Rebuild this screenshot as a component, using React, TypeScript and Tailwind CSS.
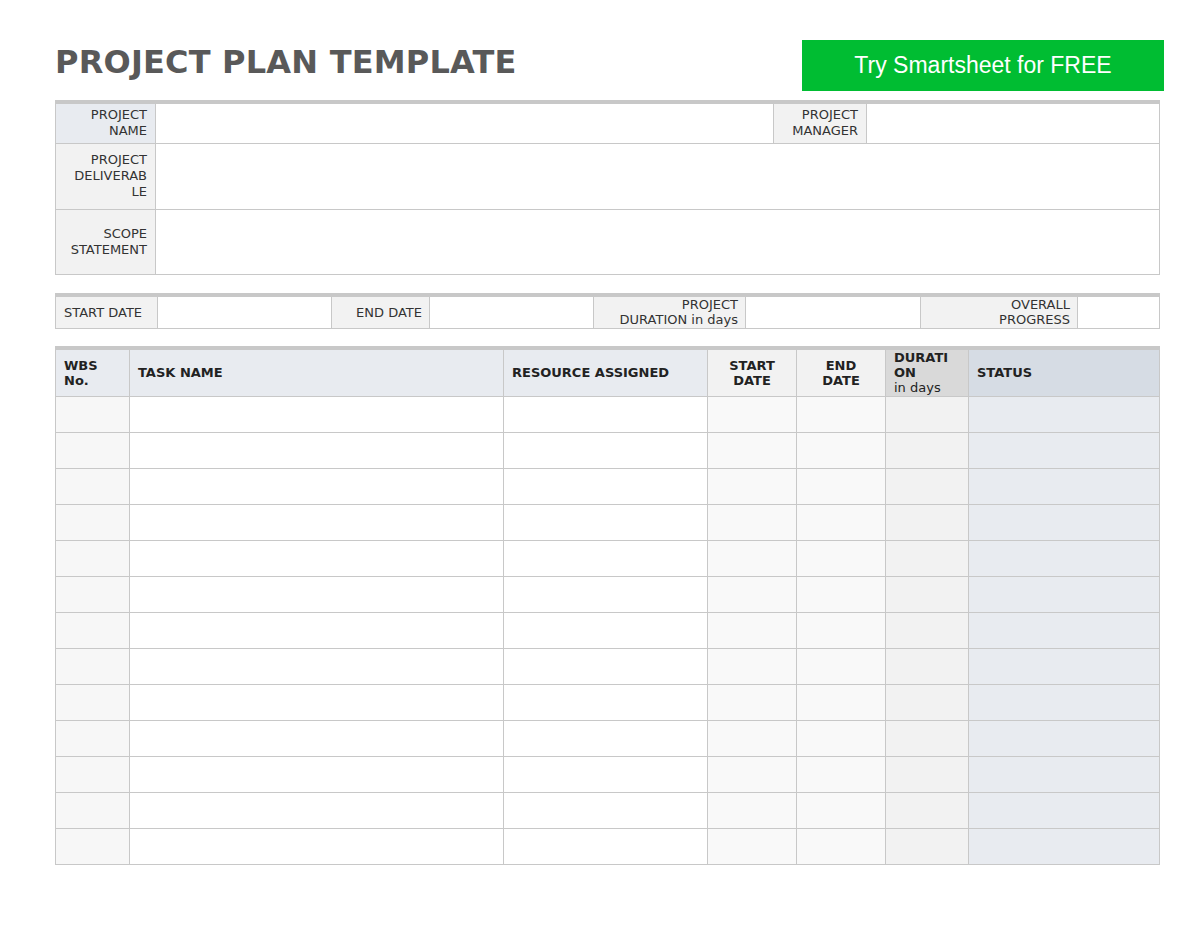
import React from "react";

const f = { fontFamily: '"DejaVu Sans", Verdana, sans-serif' };
const cell = "border border-[#c8c8c8] p-0";

export default function App() {
  const rows = Array.from({ length: 13 });
  return (
    <div className="w-[1200px] h-[927px] bg-white relative" style={f}>
      <div className="flex items-start justify-between pl-[55px] pr-[36px] pt-[40px]">
        <h1 className="text-[32px] font-bold text-[#595959] leading-none mt-[6px] tracking-[0.2px]">PROJECT PLAN TEMPLATE</h1>
        <div className="w-[362px] h-[51px] bg-[#00bd32] flex items-center justify-center text-white text-[23px]" style={{ fontFamily: '"Liberation Sans", Arial, sans-serif' }}>
          Try Smartsheet for FREE
        </div>
      </div>
      <div className="ml-[55px] w-[1105px] mt-[9px] text-[13px] text-[#333]">
        <table className="w-full border-collapse table-fixed border-t-[4px] border-t-[#c8c8c8]">
          <colgroup><col className="w-[100px]" /><col className="w-[618px]" /><col className="w-[93px]" /><col /></colgroup>
          <tbody>
            <tr className="h-[41px]">
              <td className={`${cell} bg-[#e8ebf0] text-right pr-[8px] leading-[16px]`}>PROJECT<br />NAME</td>
              <td className={cell}></td>
              <td className={`${cell} bg-[#f2f2f2] text-right pr-[8px] leading-[16px]`}>PROJECT<br />MANAGER</td>
              <td className={cell}></td>
            </tr>
            <tr className="h-[66px]">
              <td className={`${cell} bg-[#f2f2f2] text-right pr-[8px] leading-[16px]`}>PROJECT<br />DELIVERAB<br />LE</td>
              <td className={cell} colSpan={3}></td>
            </tr>
            <tr className="h-[65px]">
              <td className={`${cell} bg-[#f2f2f2] text-right pr-[8px] leading-[16px]`}>SCOPE<br />STATEMENT</td>
              <td className={cell} colSpan={3}></td>
            </tr>
          </tbody>
        </table>
        <table className="w-full border-collapse table-fixed border-t-[4px] border-t-[#c8c8c8] mt-[18px]">
          <colgroup>
            <col className="w-[102px]" /><col className="w-[174px]" /><col className="w-[98px]" /><col className="w-[164px]" />
            <col className="w-[152px]" /><col className="w-[175px]" /><col className="w-[157px]" /><col />
          </colgroup>
          <tbody>
            <tr className="h-[34px]">
              <td className={`${cell} bg-[#f2f2f2] text-left pl-[8px]`}>START DATE</td>
              <td className={cell}></td>
              <td className={`${cell} bg-[#f2f2f2] text-right pr-[7px]`}>END DATE</td>
              <td className={cell}></td>
              <td className={`${cell} bg-[#f2f2f2] text-right pr-[7px] leading-[15px]`}>PROJECT<br />DURATION in days</td>
              <td className={cell}></td>
              <td className={`${cell} bg-[#f2f2f2] text-right pr-[7px] leading-[15px]`}>OVERALL<br />PROGRESS</td>
              <td className={cell}></td>
            </tr>
          </tbody>
        </table>
        <table className="w-full border-collapse table-fixed border-t-[4px] border-t-[#c8c8c8] mt-[17px]">
          <colgroup>
            <col className="w-[74px]" /><col className="w-[374px]" /><col className="w-[204px]" /><col className="w-[89px]" />
            <col className="w-[89px]" /><col className="w-[83px]" /><col />
          </colgroup>
          <thead>
            <tr className="h-[48px] font-bold text-[13px] leading-[15px] text-[#222]">
              <td className={`${cell} bg-[#e8ebf0] pl-[8px]`}>WBS<br />No.</td>
              <td className={`${cell} bg-[#e8ebf0] pl-[8px]`}>TASK NAME</td>
              <td className={`${cell} bg-[#e8ebf0] pl-[8px]`}>RESOURCE ASSIGNED</td>
              <td className={`${cell} bg-[#f2f2f2] text-center`}>START<br />DATE</td>
              <td className={`${cell} bg-[#f2f2f2] text-center`}>END<br />DATE</td>
              <td className={`${cell} bg-[#d9d9d9] pl-[8px]`}>DURATI<br />ON<br /><span className="font-normal">in days</span></td>
              <td className={`${cell} bg-[#d6dce4] pl-[8px]`}>STATUS</td>
            </tr>
          </thead>
          <tbody>
            {rows.map((_, i) => (
              <tr key={i} className="h-[36px]">
                <td className={`${cell} bg-[#f7f7f7]`}></td>
                <td className={cell}></td>
                <td className={cell}></td>
                <td className={`${cell} bg-[#f9f9f9]`}></td>
                <td className={`${cell} bg-[#f9f9f9]`}></td>
                <td className={`${cell} bg-[#f2f2f2]`}></td>
                <td className={`${cell} bg-[#e8ebf0]`}></td>
              </tr>
            ))}
          </tbody>
        </table>
      </div>
    </div>
  );
}
